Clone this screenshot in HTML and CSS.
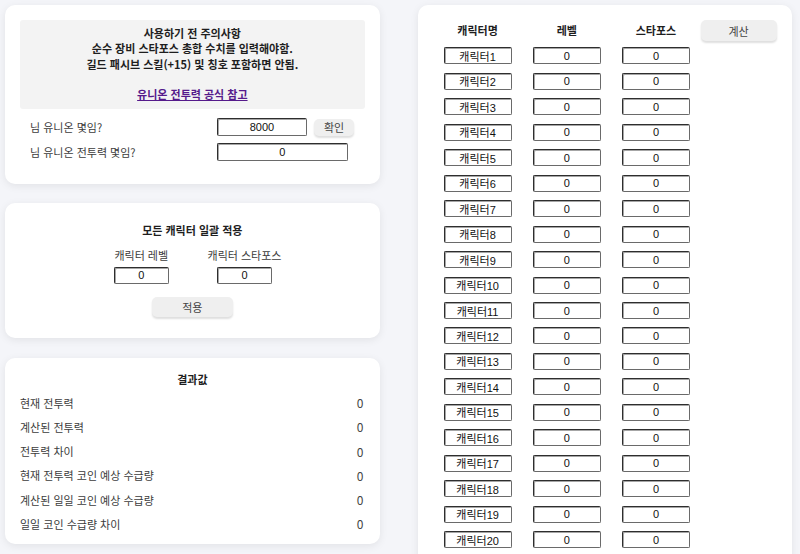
FILE: index.html
```html
<!DOCTYPE html>
<html lang="ko">
<head>
<meta charset="utf-8">
<title>유니온 전투력 계산기</title>
<link rel="stylesheet" href="styles.css">
</head>
<body>
<div class="page">
  <div class="left">
    <section class="card card-info">
      <div class="notice">
        사용하기 전 주의사항<br>
        순수 장비 스타포스 총합 수치를 입력해야함.<br>
        길드 패시브 스킬(+15) 및 칭호 포함하면 안됨.<br>
        <br>
        <a href="#">유니온 전투력 공식 참고</a>
      </div>
      <div class="form">
        <div class="form-row">
          <span class="label">님 유니온 몇임?</span>
          <input class="field field-union" value="8000">
          <button class="btn btn-confirm">확인</button>
        </div>
        <div class="form-row">
          <span class="label">님 유니온 전투력 몇임?</span>
          <input class="field field-power" value="0">
        </div>
      </div>
    </section>

    <section class="card card-bulk">
      <div class="title">모든 캐릭터 일괄 적용</div>
      <div class="bulk">
        <div class="bulk-group">
          <span class="label-sm">캐릭터 레벨</span>
          <input class="field field-bulk-lv" value="0">
        </div>
        <div class="bulk-group">
          <span class="label-sm">캐릭터 스타포스</span>
          <input class="field field-bulk-sf" value="0">
        </div>
      </div>
      <div class="bulk-action">
        <button class="btn btn-apply">적용</button>
      </div>
    </section>

    <section class="card card-result">
      <div class="title">결과값</div>
      <div class="results">
        <div class="result-row"><span>현재 전투력</span><span class="val">0</span></div>
        <div class="result-row"><span>계산된 전투력</span><span class="val">0</span></div>
        <div class="result-row"><span>전투력 차이</span><span class="val">0</span></div>
        <div class="result-row"><span>현재 전투력 코인 예상 수급량</span><span class="val">0</span></div>
        <div class="result-row"><span>계산된 일일 코인 예상 수급량</span><span class="val">0</span></div>
        <div class="result-row"><span>일일 코인 수급량 차이</span><span class="val">0</span></div>
      </div>
    </section>
  </div>

  <section class="card card-table">
    <div class="grid">
      <div class="th">캐릭터명</div>
      <div class="th">레벨</div>
      <div class="th">스타포스</div>
      <div class="th-btn"><button class="btn btn-calc">계산</button></div>

      <input class="field cell c1" value="캐릭터1"><input class="field cell c2" value="0"><input class="field cell c3" value="0">
      <input class="field cell c1" value="캐릭터2"><input class="field cell c2" value="0"><input class="field cell c3" value="0">
      <input class="field cell c1" value="캐릭터3"><input class="field cell c2" value="0"><input class="field cell c3" value="0">
      <input class="field cell c1" value="캐릭터4"><input class="field cell c2" value="0"><input class="field cell c3" value="0">
      <input class="field cell c1" value="캐릭터5"><input class="field cell c2" value="0"><input class="field cell c3" value="0">
      <input class="field cell c1" value="캐릭터6"><input class="field cell c2" value="0"><input class="field cell c3" value="0">
      <input class="field cell c1" value="캐릭터7"><input class="field cell c2" value="0"><input class="field cell c3" value="0">
      <input class="field cell c1" value="캐릭터8"><input class="field cell c2" value="0"><input class="field cell c3" value="0">
      <input class="field cell c1" value="캐릭터9"><input class="field cell c2" value="0"><input class="field cell c3" value="0">
      <input class="field cell c1" value="캐릭터10"><input class="field cell c2" value="0"><input class="field cell c3" value="0">
      <input class="field cell c1" value="캐릭터11"><input class="field cell c2" value="0"><input class="field cell c3" value="0">
      <input class="field cell c1" value="캐릭터12"><input class="field cell c2" value="0"><input class="field cell c3" value="0">
      <input class="field cell c1" value="캐릭터13"><input class="field cell c2" value="0"><input class="field cell c3" value="0">
      <input class="field cell c1" value="캐릭터14"><input class="field cell c2" value="0"><input class="field cell c3" value="0">
      <input class="field cell c1" value="캐릭터15"><input class="field cell c2" value="0"><input class="field cell c3" value="0">
      <input class="field cell c1" value="캐릭터16"><input class="field cell c2" value="0"><input class="field cell c3" value="0">
      <input class="field cell c1" value="캐릭터17"><input class="field cell c2" value="0"><input class="field cell c3" value="0">
      <input class="field cell c1" value="캐릭터18"><input class="field cell c2" value="0"><input class="field cell c3" value="0">
      <input class="field cell c1" value="캐릭터19"><input class="field cell c2" value="0"><input class="field cell c3" value="0">
      <input class="field cell c1" value="캐릭터20"><input class="field cell c2" value="0"><input class="field cell c3" value="0">
    </div>
  </section>
</div>
</body>
</html>
```

FILE: styles.css
```css
html, body {
  margin: 0;
  overflow: hidden;
}

body {
  background: #f4f5f9;
  font-family: "Noto Sans CJK KR", "Noto Sans", sans-serif;
  font-size: 11px;
  color: #333;
}

.page {
  display: flex;
  align-items: flex-start;
  gap: 38.3px;
  padding: 5px 0 0 5px;
}

.left {
  width: 374.7px;
  flex: none;
  display: flex;
  flex-direction: column;
  gap: 19.8px;
}

.card {
  background: #fff;
  border-radius: 10px;
  box-shadow: 0 2px 8px rgba(0, 0, 0, 0.08);
  box-sizing: border-box;
}

/* card 1 */
.card-info {
  height: 178.7px;
  padding: 15px;
}

.notice {
  background: #f3f3f3;
  border-radius: 3px;
  padding: 5.8px 10px;
  text-align: center;
  font-weight: bold;
  line-height: 15.4px;
  color: #1e1e1e;
}

.notice a {
  color: #551a8b;
}

.form {
  margin-top: 6px;
}

.form-row {
  display: flex;
  align-items: center;
  height: 25px;
  padding-left: 10px;
}

.label {
  width: 186.7px;
  flex: none;
  color: #3c3c3c;
  line-height: 15px;
}

.field {
  box-sizing: border-box;
  height: 17.4px;
  padding: 0;
  margin: 0;
  border: 1px solid #2e2e2e;
  border-right-color: #6a6a6a;
  border-bottom-color: #6a6a6a;
  border-radius: 2px;
  box-shadow: inset 1px 1px 0 rgba(0, 0, 0, 0.35);
  text-align: center;
  font-family: "Liberation Sans", "Noto Sans CJK KR", sans-serif;
  font-size: 11px;
  color: #111;
  background: #fff;
}

.field-union {
  width: 90.6px;
}

.field-power {
  width: 131px;
}

.btn {
  border: none;
  background: #efefef;
  border-radius: 5px;
  box-shadow: 0 2px 2px rgba(0, 0, 0, 0.13);
  font-family: "Noto Sans CJK KR", sans-serif;
  font-size: 11px;
  color: #444;
  padding: 0;
  cursor: pointer;
}

.btn-confirm {
  width: 40.3px;
  height: 17px;
  margin-left: 6.7px;
}

/* card 2 */
.card-bulk {
  height: 134.4px;
  padding-top: 19.9px;
}

.title {
  font-weight: bold;
  text-align: center;
  line-height: 15.5px;
  color: #1e1e1e;
}

.bulk {
  display: flex;
  justify-content: center;
  gap: 38.8px;
  margin-top: 9.5px;
  padding-left: 10.5px;
}

.bulk-group {
  display: flex;
  flex-direction: column;
  align-items: center;
}

.label-sm {
  color: #3c3c3c;
  line-height: 15.5px;
}

.field-bulk-lv,
.field-bulk-sf {
  height: 16.7px;
  margin-top: 3px;
}

.field-bulk-lv {
  width: 55px;
}

.field-bulk-sf {
  width: 54.3px;
}

.bulk-action {
  display: flex;
  justify-content: center;
  margin-top: 13.3px;
}

.btn-apply {
  width: 81px;
  height: 20.5px;
}

/* card 3 */
.card-result {
  padding: 14.5px 15px 8px;
}

.results {
  margin-top: 3px;
}

.result-row {
  display: flex;
  justify-content: space-between;
  align-items: center;
  height: 24.2px;
  color: #3c3c3c;
}

.val {
  padding-right: 1.4px;
  font-size: 12px;
  color: #444;
}

/* right table */
.card-table {
  width: 374px;
  flex: none;
  padding: 13.3px 15px 15px;
}

.grid {
  display: grid;
  grid-template-columns: repeat(3, 89.2px) 76px;
  grid-template-rows: 24.8px;
  grid-auto-rows: 25.47px;
  align-items: center;
  justify-items: center;
}

.th {
  font-weight: bold;
  color: #1e1e1e;
  line-height: 15px;
}

.th-btn {
  justify-self: end;
}

.btn-calc {
  display: block;
  width: 76px;
  height: 21.5px;
}

.cell {
  width: 68px;
  height: 17px;
}

.c1 { grid-column: 1; }
.c2 { grid-column: 2; }
.c3 { grid-column: 3; }
```
